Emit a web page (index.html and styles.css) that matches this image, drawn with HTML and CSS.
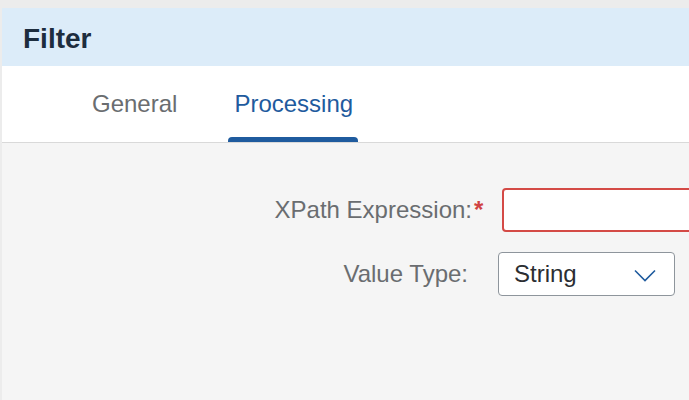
FILE: index.html
```html
<!DOCTYPE html>
<html>
<head>
<meta charset="utf-8">
<link rel="stylesheet" href="styles.css">
</head>
<body>
<div class="panel">
  <header class="header"><h1 class="title">Filter</h1></header>
  <nav class="tabs">
    <div class="tab">General</div>
    <div class="tab active">Processing</div>
  </nav>
  <main class="content">
    <div class="form">
      <label class="label req"><span>XPath Expression:</span><span class="suffix">*</span></label>
      <div class="input"></div>
      <label class="label"><span>Value Type:</span><span class="suffix"></span></label>
      <div class="select">
        <span class="select-text">String</span>
        <svg class="chev" width="22" height="13" viewBox="0 0 22 13"><path d="M1 1.5 L11 11.5 L21 1.5" fill="none" stroke="#1f5b9e" stroke-width="1.6"/></svg>
      </div>
    </div>
  </main>
</div>
</body>
</html>
```
FILE: styles.css
```css
html, body { margin: 0; padding: 0; }
body {
  width: 689px; height: 400px; overflow: hidden;
  background: #ececec;
  font-family: "Liberation Sans", Arial, sans-serif;
}
.panel {
  margin-top: 8px;
  margin-left: 2px;
  height: 392px;
  display: flex; flex-direction: column;
  background: #f5f5f5;
  overflow: hidden;
}
.header {
  height: 58px;
  background: #dcecf9;
  display: flex; align-items: center;
  padding-left: 21px;
}
.title {
  margin: 0; padding-top: 4px;
  font-size: 28px; font-weight: bold; color: #1d2d3e;
}
.tabs {
  height: 77px;
  background: #fff;
  border-bottom: 1px solid #d9d9d9;
  display: flex; align-items: stretch;
  padding-left: 66px;
  box-sizing: border-box;
}
.tab {
  display: flex; align-items: center;
  padding: 0 24px 1px;
  font-size: 24px; color: #6a6d70;
  position: relative;
}
.tab.active { color: #1f5b9e; padding: 0 5px 1px 6px; margin-left: 27px; }
.tab.active::after {
  content: ""; position: absolute; left: 0; right: 0; bottom: 0;
  height: 5px; background: #1f5b9e; border-radius: 4px 4px 0 0;
}
.content { flex: 1; padding-top: 45px; }
.form {
  display: grid;
  grid-template-columns: 496px 400px;
  row-gap: 20px;
  align-items: center;
}
.label {
  display: flex; justify-content: flex-end; align-items: center;
  font-size: 24px; color: #6a6d70;
}
.suffix { width: 30px; color: #d04343; font-size: 24px; font-weight: bold; padding-left: 2px; box-sizing: border-box; }
.req .suffix { width: 26px; }
.input {
  margin-left: 4px;
  height: 44px; width: 300px;
  background: #fff;
  border: 2px solid #d44a46;
  border-radius: 4px;
  box-sizing: border-box;
}
.select {
  width: 177px; height: 44px;
  background: #fff;
  border: 1px solid #8e959c;
  border-radius: 4px;
  box-sizing: border-box;
  display: flex; align-items: center; justify-content: space-between;
  padding: 0 18px 0 15px;
}
.select-text { font-size: 24px; color: #2b2e32; }
.chev { display: block; margin-top: 2px; }
```
